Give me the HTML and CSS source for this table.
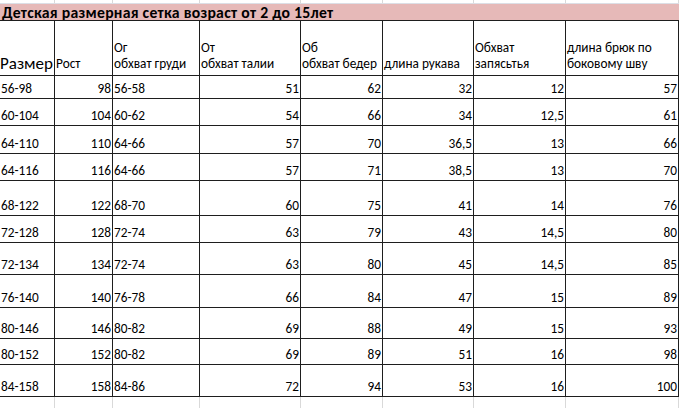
FILE: index.html
```html
<!DOCTYPE html>
<html lang="ru">
<head>
<meta charset="utf-8">
<title>Детская размерная сетка</title>
<link rel="stylesheet" href="styles.css">
</head>
<body>
<div class="sheet">
  <div class="gl"></div><div class="gl"></div><div class="gl"></div><div class="gl"></div><div class="gl"></div><div class="gl"></div><div class="gl"></div><div class="gl"></div>
  <div class="title">Детская размерная сетка возраст от 2 до 15лет</div>

  <div class="c h big">Размер</div>
  <div class="c h">Рост</div>
  <div class="c h">Ог<br>обхват груди</div>
  <div class="c h">От<br>обхват талии</div>
  <div class="c h">Об<br>обхват бедер</div>
  <div class="c h">длина рукава</div>
  <div class="c h">Обхват<br>запясьтья</div>
  <div class="c h">длина брюк по<br>боковому шву</div>

  <div class="c">56-98</div><div class="c n">98</div><div class="c">56-58</div><div class="c n">51</div><div class="c n">62</div><div class="c n">32</div><div class="c n">12</div><div class="c n">57</div>
  <div class="c">60-104</div><div class="c n">104</div><div class="c">60-62</div><div class="c n">54</div><div class="c n">66</div><div class="c n">34</div><div class="c n">12,5</div><div class="c n">61</div>
  <div class="c">64-110</div><div class="c n">110</div><div class="c">64-66</div><div class="c n">57</div><div class="c n">70</div><div class="c n">36,5</div><div class="c n">13</div><div class="c n">66</div>
  <div class="c">64-116</div><div class="c n">116</div><div class="c">64-66</div><div class="c n">57</div><div class="c n">71</div><div class="c n">38,5</div><div class="c n">13</div><div class="c n">70</div>
  <div class="c">68-122</div><div class="c n">122</div><div class="c">68-70</div><div class="c n">60</div><div class="c n">75</div><div class="c n">41</div><div class="c n">14</div><div class="c n">76</div>
  <div class="c">72-128</div><div class="c n">128</div><div class="c">72-74</div><div class="c n">63</div><div class="c n">79</div><div class="c n">43</div><div class="c n">14,5</div><div class="c n">80</div>
  <div class="c">72-134</div><div class="c n">134</div><div class="c">72-74</div><div class="c n">63</div><div class="c n">80</div><div class="c n">45</div><div class="c n">14,5</div><div class="c n">85</div>
  <div class="c">76-140</div><div class="c n">140</div><div class="c">76-78</div><div class="c n">66</div><div class="c n">84</div><div class="c n">47</div><div class="c n">15</div><div class="c n">89</div>
  <div class="c">80-146</div><div class="c n">146</div><div class="c">80-82</div><div class="c n">69</div><div class="c n">88</div><div class="c n">49</div><div class="c n">15</div><div class="c n">93</div>
  <div class="c">80-152</div><div class="c n">152</div><div class="c">80-82</div><div class="c n">69</div><div class="c n">89</div><div class="c n">51</div><div class="c n">16</div><div class="c n">98</div>
  <div class="c">84-158</div><div class="c n">158</div><div class="c">84-86</div><div class="c n">72</div><div class="c n">94</div><div class="c n">53</div><div class="c n">16</div><div class="c n">100</div>

  <div class="gl"></div><div class="gl"></div><div class="gl"></div><div class="gl"></div><div class="gl"></div><div class="gl"></div><div class="gl"></div><div class="gl"></div>
</div>
</body>
</html>
```
FILE: styles.css
```css
html, body {
  margin: 0;
  padding: 0;
  background: #ffffff;
}
body {
  width: 680px;
  height: 408px;
  overflow: hidden;
  font-family: "Carlito", "Lato", "Liberation Sans", sans-serif;
  color: #000000;
}
.sheet {
  display: grid;
  grid-template-columns: 55px 58px 87px 101px 82px 91px 92px 113px;
  grid-template-rows: 3px 18px 55px 23px 27px 28px 27px 35px 27px 32px 33px 31px 26px 32px 11px;
  width: 680px;
}
.gl {
  box-sizing: border-box;
  border-right: 1px solid #d9d9d9;
}
.title {
  grid-column: 1 / span 8;
  box-sizing: border-box;
  background: #e6b9b8;
  border-top: 1px solid #dcdfe6;
  border-bottom: 1px solid #1e1e1e;
  font-weight: bold;
  font-size: 15.7px;
  letter-spacing: 0.28px;
  line-height: 17px;
  padding-left: 2px;
  white-space: nowrap;
  overflow: hidden;
}
.c {
  box-sizing: border-box;
  border-right: 1px solid #1e1e1e;
  border-bottom: 1px solid #1e1e1e;
  font-size: 13.3px;
  line-height: 15px;
  padding: 0 2px 2px 1px;
  display: flex;
  flex-direction: column;
  justify-content: flex-end;
  align-items: flex-start;
  white-space: nowrap;
  overflow: hidden;
}
.n {
  align-items: flex-end;
  padding-right: 1px;
}
.h {
  line-height: 16px;
  padding-bottom: 3px;
}
.big {
  font-size: 17px;
  padding-left: 0;
  padding-right: 0;
}
```
